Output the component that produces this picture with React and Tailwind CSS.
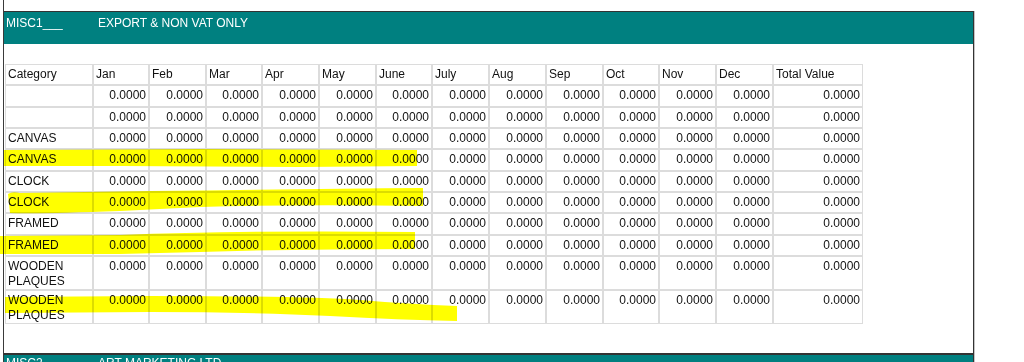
const MONTHS = ['Jan', 'Feb', 'Mar', 'Apr', 'May', 'June', 'July', 'Aug', 'Sep', 'Oct', 'Nov', 'Dec'];
const MONTH_W = [56, 57, 56, 57, 57, 56, 57, 57, 57, 56, 57, 57];

const ROWS = [
  [''],
  [''],
  ['CANVAS'],
  ['CANVAS'],
  ['CLOCK'],
  ['CLOCK'],
  ['FRAMED'],
  ['FRAMED'],
  ['WOODEN', 'PLAQUES'],
  ['WOODEN', 'PLAQUES'],
];

const cell = 'border border-[#dcdcdc] px-[2px] pt-[2px] pb-0 align-top leading-[15px]';

function Highlights() {
  // the marker strokes someone drew over the screenshot
  return (
    <svg
      className="absolute left-0 top-0 pointer-events-none mix-blend-multiply"
      width="1024"
      height="362"
      viewBox="0 0 1024 362"
    >
      <g fill="#ffff00">
        <path d="M4 150 L200 149 L417 150 L417 166 L300 167 L120 166 L4 166 Z" />
        <path d="M8 194 Q12 191 20 193 L150 191 Q300 189 423 188 L423 206 Q300 204 200 207 L120 211 Q40 214 10 213 Z" />
        <path d="M0 236 L120 235 Q250 230 415 232 L415 249 Q300 249 200 252 L120 254 L0 254 Z" />
        <path d="M5 297 L150 296 Q300 296 360 300 Q410 304 457 306 L457 321 Q400 320 330 316 Q250 312 150 312 L5 313 Z" />
      </g>
    </svg>
  );
}

function Header({ code, name, className }) {
  return (
    <div className={`bg-[#008080] text-white text-[12px] leading-[14px] flex ${className}`}>
      <span className="w-[94px] pl-[2px]">{code}</span>
      <span>{name}</span>
    </div>
  );
}

export default function App() {
  return (
    <div
      className="relative w-[1024px] h-[362px] overflow-hidden bg-white text-[#111]"
      style={{ fontFamily: '"Liberation Sans", Arial, sans-serif' }}
    >
      <div className="ml-[3px] w-[971px] h-[362px] border-l border-[#3a3a3a] pt-[11px]">
        {/* MISC1 block */}
        <div className="border-t border-r border-b border-[#333] shadow-[1px_0_0_#c4c4c4]">
          <Header code="MISC1___" name="EXPORT & NON VAT ONLY" className="h-[32px] pt-[4px]" />
          <div className="h-[309px] pt-[20px] pl-[1px]">
            <table className="table-fixed border-separate border-spacing-0 text-[12px] w-[858px]">
              <colgroup>
                <col style={{ width: 88 }} />
                {MONTH_W.map((w, i) => (
                  <col key={i} style={{ width: w }} />
                ))}
                <col style={{ width: 90 }} />
              </colgroup>
              <thead>
                <tr className="h-[21.33px]">
                  <th className={`${cell} text-left font-normal`}>Category</th>
                  {MONTHS.map(m => (
                    <th key={m} className={`${cell} text-left font-normal`}>{m}</th>
                  ))}
                  <th className={`${cell} text-left font-normal`}>Total Value</th>
                </tr>
              </thead>
              <tbody>
                {ROWS.map((r, i) => {
                  const two = r.length > 1;
                  return (
                    <tr key={i} className={two ? 'h-[34px]' : 'h-[21.33px]'}>
                      <td className={cell}>
                        {r[0] ? r.map((l, j) => <div key={j}>{l}</div>) : <div>&nbsp;</div>}
                      </td>
                      {MONTHS.map(m => (
                        <td key={m} className={`${cell} text-right`}>0.0000</td>
                      ))}
                      <td className={`${cell} text-right`}>0.0000</td>
                    </tr>
                  );
                })}
              </tbody>
            </table>
          </div>
        </div>

        {/* MISC2 block, cut off by the window */}
        <div className="border-t border-r border-[#333] shadow-[1px_0_0_#c4c4c4]">
          <Header code="MISC2___" name="ART MARKETING LTD" className="h-[32px] pt-[1px]" />
        </div>
      </div>
      <Highlights />
    </div>
  );
}
